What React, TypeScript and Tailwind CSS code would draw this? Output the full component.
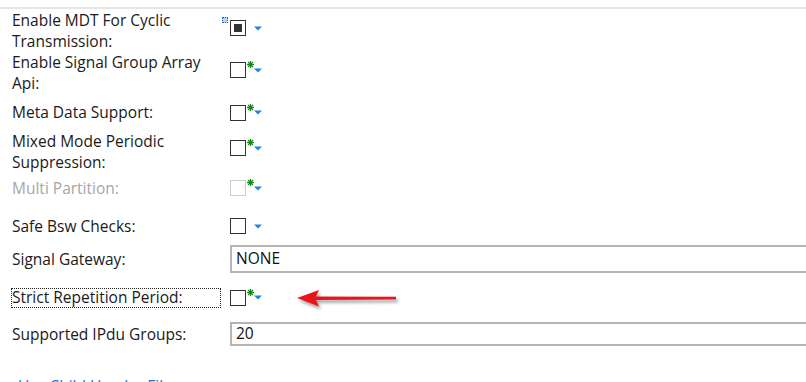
import React from "react";

const font = { fontFamily: '"Open Sans", "Noto Sans", sans-serif' };

const Star: React.FC = () => (
  <svg width="7" height="7" viewBox="0 0 7 7" className="absolute left-[16px] top-[-2px]">
    <g stroke="#138a13" strokeWidth="1.3">
      <line x1="3.5" y1="0" x2="3.5" y2="7" />
      <line x1="0" y1="3.5" x2="7" y2="3.5" />
      <line x1="1" y1="1" x2="6" y2="6" />
      <line x1="6" y1="1" x2="1" y2="6" />
    </g>
  </svg>
);

const Caret: React.FC = () => (
  <svg width="8" height="5" viewBox="0 0 8 5" className="ml-[8px]">
    <path d="M0 0.5 H8 L4 4.5 Z" fill="#1c84e0" />
  </svg>
);

type CheckProps = { checked?: boolean; star?: boolean; disabled?: boolean; focus?: boolean };

const Check: React.FC<CheckProps> = ({ checked, star, disabled, focus }) => (
  <div className="flex items-center">
    <div
      className={
        "relative w-[16px] h-[16px] border-[1.5px] flex items-center justify-center " +
        (disabled ? "border-[#cfcfcf]" : "border-[#333]")
      }
    >
      {checked && <div className="w-[8px] h-[8px] bg-[#333]" />}
      {star && <Star />}
      {focus && (
        <div className="absolute left-[-9px] top-[-4px] w-[6px] h-[6px] border border-dotted border-[#2a62c8] bg-[#b8d4f4]" />
      )}
    </div>
    <Caret />
  </div>
);

const Label: React.FC<{ children: React.ReactNode; muted?: boolean }> = ({ children, muted }) => (
  <div
    className={
      "w-[218px] shrink-0 pl-[12px] leading-[21px] " + (muted ? "text-[#a6a6a6]" : "text-[#1a1a1a]")
    }
  >
    {children}
  </div>
);

const TextBox: React.FC<{ value: string; h: string }> = ({ value, h }) => (
  <div
    className={
      "w-[600px] shrink-0 flex items-center pl-[4px] border-2 border-[#b4b4b4] border-r-0 text-[#111] " + h
    }
  >
    {value}
  </div>
);

export default function App() {
  return (
    <div className="w-[806px] h-[382px] bg-white overflow-hidden text-[15.5px] relative" style={font}>
      <div className="mt-[7px] h-[2px] bg-[#e6e6e6]" />

      <div className="flex h-[42px] mt-[1px]">
        <Label>
          Enable MDT For Cyclic
          <br />
          Transmission:
        </Label>
        <div className="pl-[12px] pt-[10px]">
          <Check checked focus />
        </div>
      </div>

      <div className="flex h-[42px]">
        <Label>
          Enable Signal Group Array
          <br />
          Api:
        </Label>
        <div className="pl-[12px] pt-[10px]">
          <Check star />
        </div>
      </div>

      <div className="flex items-center h-[37px]">
        <Label>Meta Data Support:</Label>
        <div className="pl-[12px]">
          <Check star />
        </div>
      </div>

      <div className="flex h-[42px]">
        <Label>
          Mixed Mode Periodic
          <br />
          Suppression:
        </Label>
        <div className="pl-[12px] pt-[9px]">
          <Check star />
        </div>
      </div>

      <div className="flex items-center h-[30px]">
        <Label muted>Multi Partition:</Label>
        <div className="pl-[12px]">
          <Check star disabled />
        </div>
      </div>

      <div className="flex items-center h-[42px] pt-[4px]">
        <Label>Safe Bsw Checks:</Label>
        <div className="pl-[12px]">
          <Check />
        </div>
      </div>

      <div className="flex items-center h-[28px]">
        <Label>Signal Gateway:</Label>
        <div className="pl-[12px]">
          <TextBox value="NONE" h="h-[28px]" />
        </div>
      </div>

      <div className="flex items-center h-[49px] relative">
        <div className="w-[218px] shrink-0 pl-[11px]">
          <div className="w-[210px] h-[20px] border border-dotted border-[#222] flex items-center text-[#1a1a1a]">
            Strict Repetition Period:
          </div>
        </div>
        <div className="pl-[12px]">
          <Check star />
        </div>
        <svg width="112" height="28" viewBox="0 0 112 28" className="absolute left-[292px] top-[12px]">
          <defs>
            <filter id="sh" x="-10%" y="-30%" width="130%" height="180%">
              <feDropShadow dx="2" dy="3" stdDeviation="1.6" floodColor="#000" floodOpacity="0.35" />
            </filter>
          </defs>
          <g filter="url(#sh)">
            <path d="M5 13 L27 5 L24 11.5 L104 11.8 L104 14.6 L24 15 L27 21.5 Z" fill="#e8141a" />
          </g>
        </svg>
      </div>

      <div className="flex items-center h-[24px]">
        <Label>Supported IPdu Groups:</Label>
        <div className="pl-[12px]">
          <TextBox value="20" h="h-[24px]" />
        </div>
      </div>

      <div className="pl-[18px] mt-[30px] text-[#1a6fd1] leading-[21px]">Use Child Header Files</div>
    </div>
  );
}
